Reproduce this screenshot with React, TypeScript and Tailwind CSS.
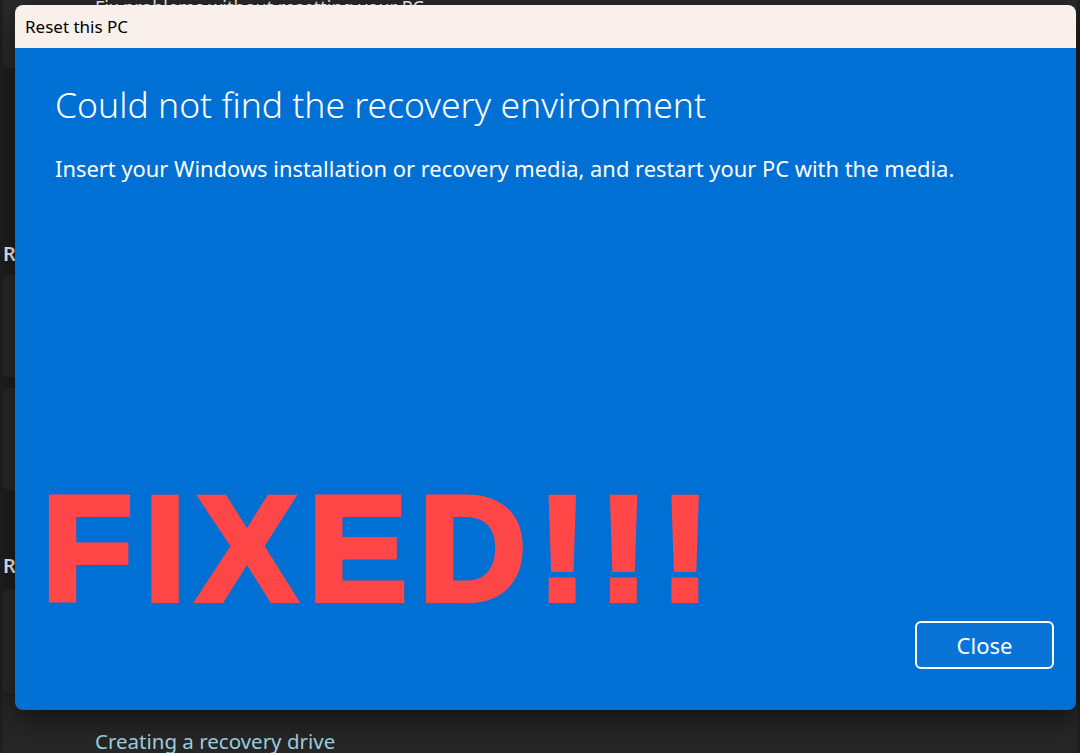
import { useState } from 'react'

// Settings page that sits behind the dialog
const SettingsBackdrop = () => {
  return (
    <div className="flex flex-col pl-[3px] pr-[3px] text-white">
      <div className="-mt-[18px] h-[86px] rounded-md bg-[#2b2b2b] pl-[92px] pt-[14px]">
        <span className="text-[18px] leading-[22px]">Fix problems without resetting your PC</span>
      </div>
      <h2 className="mt-[172px] text-[20px] font-semibold leading-[28px]">Recovery options</h2>
      <div className="mt-[7px] h-[102px] rounded-md bg-[#2b2b2b]" />
      <div className="mt-[11px] h-[102px] rounded-md bg-[#2b2b2b]" />
      <h2 className="mt-[62px] text-[20px] font-semibold leading-[28px]">Related support</h2>
      <div className="mt-[9px] h-[105px] rounded-t-md bg-[#2b2b2b]" />
      <div className="h-[70px] rounded-b-md border-t border-[#1c1c1c] bg-[#272727] pl-[92px] pt-[32px]">
        <span className="text-[20.5px] leading-[28px] text-[#9fd3e0]">Creating a recovery drive</span>
      </div>
    </div>
  )
}

const App = () => {
  const [open, setOpen] = useState(true)

  return (
    <div className="relative h-[753px] w-[1080px] overflow-hidden bg-[#202020] font-['Segoe_UI','Noto_Sans',sans-serif]">
      <SettingsBackdrop />

      {open && (
        <div className="absolute left-[15px] top-[5px] flex h-[705px] w-[1061px] flex-col overflow-hidden rounded-lg shadow-[0_8px_32px_rgba(0,0,0,0.6)]">
          <div className="flex h-[43px] shrink-0 items-center bg-[#f9f0ec] pl-[10px] text-[17px] text-black">
            Reset this PC
          </div>
          <div className="flex flex-1 flex-col bg-[#0070d4] pl-[40px] text-white">
            <h1 className="mt-[34px] text-[35.5px] font-light leading-[44px]">
              Could not find the recovery environment
            </h1>
            <p className="mt-[29px] text-[21.9px] leading-[28px]">
              Insert your Windows installation or recovery media, and restart your PC with the media.
            </p>
            <div className="flex-1" />
            <div className="-ml-[13px] font-['Liberation_Sans',Arial,sans-serif] text-[148px] font-bold leading-[120px] tracking-[12px] text-[#ff4747] [-webkit-text-stroke:6px_#ff4747]">
              FIXED!!!
            </div>
            <div className="mb-[41px] mt-[12px] flex justify-end pr-[22px]">
              <button
                onClick={() => setOpen(false)}
                className="h-[48px] w-[139px] rounded-[6px] border-2 border-white bg-[#0a74d6] text-[22px] leading-none text-white"
              >
                Close
              </button>
            </div>
          </div>
        </div>
      )}
    </div>
  )
}

export default App
